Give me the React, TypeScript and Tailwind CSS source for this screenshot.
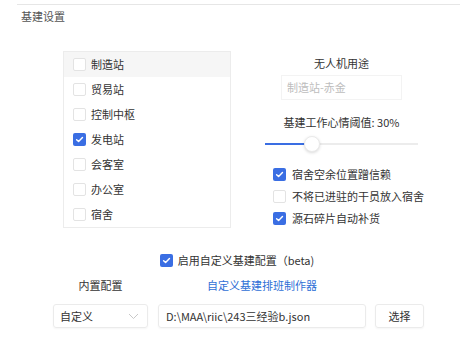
import React, { useState } from 'react';

const rooms = ['制造站', '贸易站', '控制中枢', '发电站', '会客室', '办公室', '宿舍'];

const Check = ({ checked }: { checked: boolean }) => (
  <span
    className={
      checked
        ? 'w-[13px] h-[13px] rounded-[2px] bg-[#3a6ee3] flex items-center justify-center shrink-0'
        : 'w-[13px] h-[13px] rounded-[2px] border border-[#e3e3e3] bg-white shrink-0'
    }
  >
    {checked && (
      <svg width="9" height="9" viewBox="0 0 10 10" fill="none">
        <path d="M1.8 5.2 L4 7.3 L8.3 2.8" stroke="white" strokeWidth="1.6" strokeLinecap="round" strokeLinejoin="round" />
      </svg>
    )}
  </span>
);

const App = () => {
  const [selected] = useState<string[]>(['发电站']);
  const [options] = useState([
    { label: '宿舍空余位置蹭信赖', checked: true },
    { label: '不将已进驻的干员放入宿舍', checked: false },
    { label: '源石碎片自动补货', checked: true },
  ]);

  return (
    <div
      className="w-[474px] h-[345px] bg-white text-[11px] text-[#333] overflow-hidden"
      style={{ fontFamily: '"Noto Sans CJK SC", "Microsoft YaHei", sans-serif' }}
    >
      <div className="mx-[17px] mt-[4px] border-t border-[#e6e6e6] w-[443px]" />
      <div className="pl-[21px] mt-[3px] leading-[16px] text-[#555]">基建设置</div>

      <div className="flex mt-[27px]">
        {/* room list */}
        <div className="ml-[63px] w-[168px] h-[177px] border border-[#ececec] bg-white">
          {rooms.map((room, i) => (
            <div
              key={room}
              className={
                i === 0
                  ? 'h-[25px] flex items-center gap-[5px] pl-[9px] bg-[#f6f6f6]'
                  : 'h-[25px] flex items-center gap-[5px] pl-[9px]'
              }
            >
              <Check checked={selected.includes(room)} />
              <span>{room}</span>
            </div>
          ))}
        </div>

        {/* right column */}
        <div className="ml-[34px] w-[153px] flex flex-col items-center">
          <div className="mt-[4px] leading-[16px]">无人机用途</div>
          <div className="mt-[4px] w-[121px] h-[25px] border border-[#f3f3f3] flex items-center px-[5px] text-[#bdbdbd]">
            制造站-赤金
          </div>
          <div className="mt-[14px] leading-[16px]">基建工作心情阈值: 30%</div>
          <div className="relative mt-[6px] w-[153px] h-[16px] flex items-center">
            <div className="w-full h-[2px] bg-[#ececec]" />
            <div className="absolute left-0 top-[7px] w-[40px] h-[2px] bg-[#3a6ee3]" />
            <div className="absolute left-[39px] top-0 w-[16px] h-[16px] rounded-full bg-white border border-[#eaeaea] shadow-[0_1px_3px_rgba(0,0,0,0.15)]" />
          </div>
          <div className="mt-[16px] self-start pl-[8px] flex flex-col gap-[9px]">
            {options.map((o) => (
              <div key={o.label} className="flex items-center gap-[6px] h-[13px]">
                <Check checked={o.checked} />
                <span className="whitespace-nowrap">{o.label}</span>
              </div>
            ))}
          </div>
        </div>
      </div>

      <div className="mt-[25px] flex justify-center">
        <div className="flex items-center gap-[5px] h-[14px]">
          <Check checked={true} />
          <span>启用自定义基建配置（beta)</span>
        </div>
      </div>

      <div className="mt-[10px] flex h-[16px] leading-[16px]">
        <div className="ml-[53px] w-[95px] text-center">内置配置</div>
        <div className="ml-[10px] w-[208px] text-center text-[#2f6fd6]">自定义基建排班制作器</div>
      </div>

      <div className="mt-[11px] flex">
        <div className="ml-[53px] w-[95px] h-[24px] border border-[#ebebeb] rounded-[3px] flex items-center justify-between pl-[6px] pr-[8px] shadow-[0_1px_2px_rgba(0,0,0,0.04)]">
          <span>自定义</span>
          <svg width="11" height="7" viewBox="0 0 11 7" fill="none">
            <path d="M1 1 L5.5 5.5 L10 1" stroke="#c8c8c8" strokeWidth="1" />
          </svg>
        </div>
        <div className="ml-[10px] w-[208px] h-[24px] border border-[#ebebeb] rounded-[3px] flex items-center pl-[7px] shadow-[0_1px_2px_rgba(0,0,0,0.04)]">
          D:\MAA\riic\243三经验b.json
        </div>
        <div className="ml-[9px] w-[49px] h-[24px] border border-[#ebebeb] rounded-[3px] flex items-center justify-center shadow-[0_1px_2px_rgba(0,0,0,0.04)]">
          选择
        </div>
      </div>
    </div>
  );
};

export default App;
